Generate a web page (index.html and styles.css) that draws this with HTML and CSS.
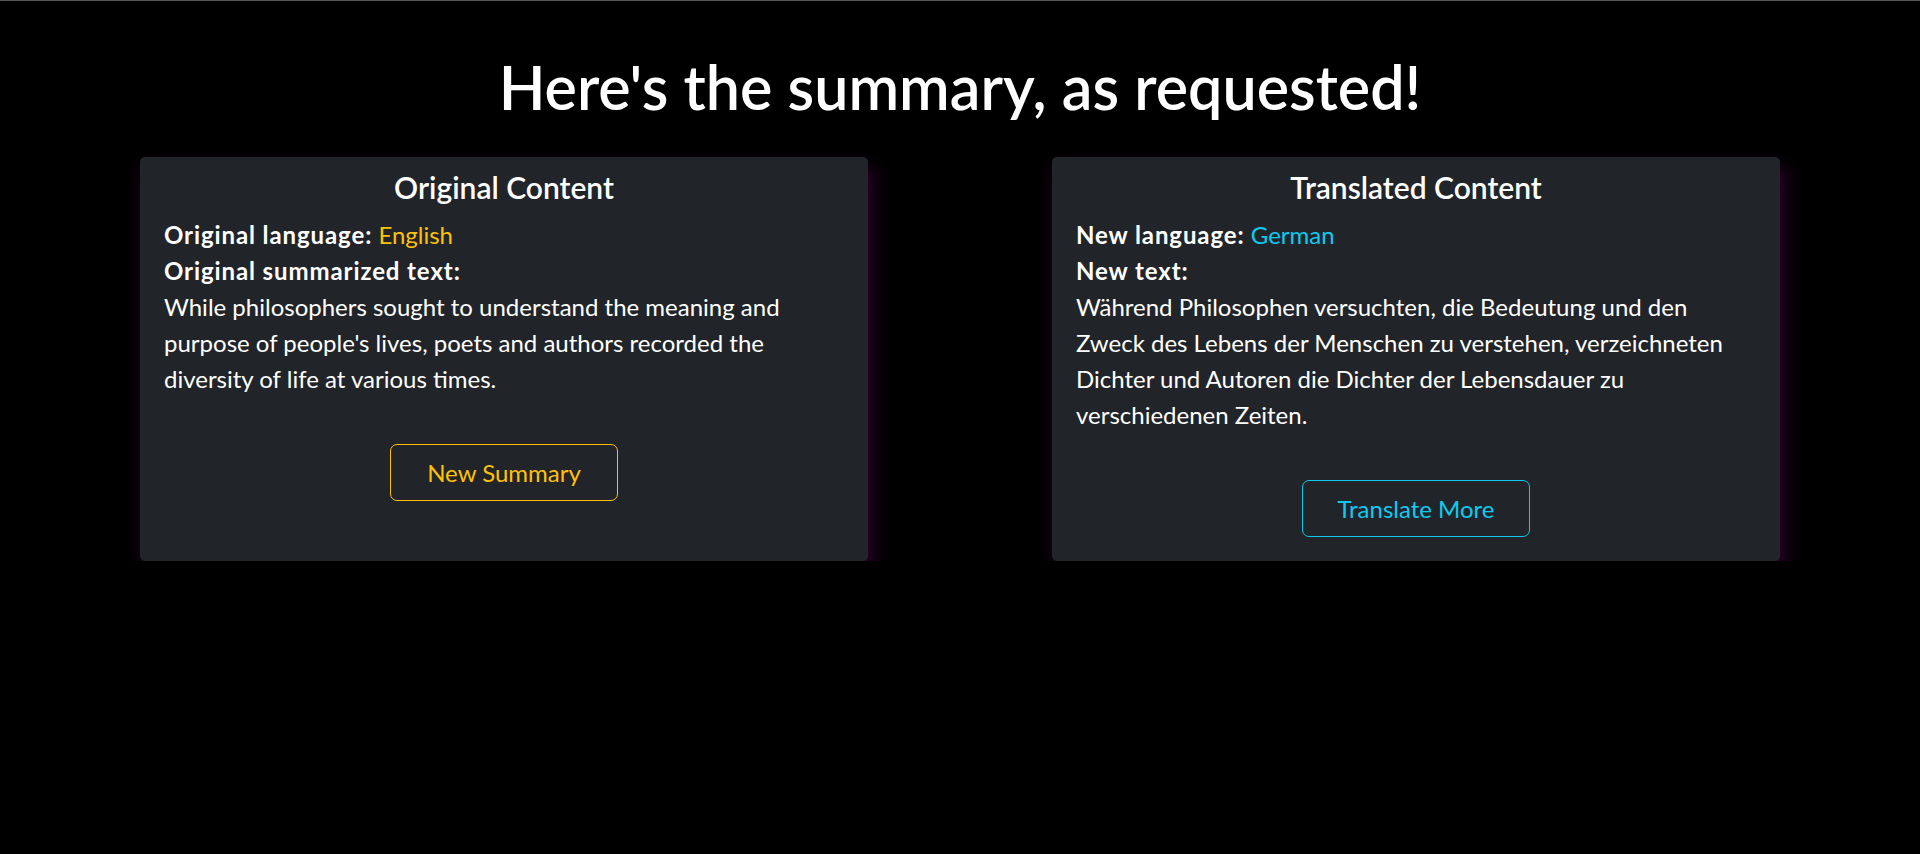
FILE: index.html
```html
<!DOCTYPE html>
<html lang="en">
<head>
<meta charset="utf-8">
<title>Summary</title>
<link rel="stylesheet" href="styles.css">
</head>
<body>
<main class="page">
  <h1 class="page-title">Here's the summary, as requested!</h1>
  <div class="cards">
    <section class="card">
      <h2 class="card-title">Original Content</h2>
      <div class="card-body">
        <p class="line"><strong>Original language:</strong> <span class="lang lang-original">English</span></p>
        <p class="line"><strong>Original summarized text:</strong></p>
        <p class="text">While philosophers sought to understand the meaning and purpose of people's lives, poets and authors recorded the diversity of life at various times.</p>
      </div>
      <div class="actions">
        <button class="btn btn-warning" type="button">New Summary</button>
      </div>
    </section>
    <section class="card">
      <h2 class="card-title">Translated Content</h2>
      <div class="card-body">
        <p class="line"><strong>New language:</strong> <span class="lang lang-new">German</span></p>
        <p class="line"><strong>New text:</strong></p>
        <p class="text">Während Philosophen versuchten, die Bedeutung und den Zweck des Lebens der Menschen zu verstehen, verzeichneten Dichter und Autoren die Dichter der Lebensdauer zu verschiedenen Zeiten.</p>
      </div>
      <div class="actions">
        <button class="btn btn-info" type="button">Translate More</button>
      </div>
    </section>
  </div>
</main>
</body>
</html>
```
FILE: styles.css
```css
html, body {
  background: #000;
}

body {
  margin: 0;
  border-top: 1px solid #555;
  color: #fff;
  font-family: Lato, "Open Sans", sans-serif;
  font-size: 24px;
  line-height: 36px;
}

.page {
  padding-top: 49px;
}

.page-title {
  margin: 0;
  text-align: center;
  font-size: 61px;
  font-weight: 600;
  line-height: 1.2;
}

.cards {
  display: flex;
  justify-content: center;
  gap: 184px;
  margin-top: 34px;
}

.card {
  width: 728px;
  box-sizing: border-box;
  padding: 12px 24px 24px;
  background: #212529;
  border-radius: 5px;
  box-shadow: 4px 10px 18px rgba(170, 0, 170, 0.3);
}

.card-title {
  margin: 0 0 12px;
  text-align: center;
  font-size: 30px;
  font-weight: 600;
  line-height: 36px;
}

.card-body p {
  margin: 0;
}

.card-body strong {
  font-weight: 700;
  letter-spacing: 0.9px;
}

.lang-original {
  color: #ffc107;
}

.lang-new {
  color: #0dcaf0;
}

.actions {
  margin-top: 47px;
  text-align: center;
}

.btn {
  width: 228px;
  box-sizing: border-box;
  padding: 9.5px 20px;
  background: transparent;
  border: 1px solid currentColor;
  border-radius: 7px;
  font-family: inherit;
  font-size: 24px;
  line-height: 36px;
  cursor: pointer;
}

.btn-warning {
  color: #ffc107;
  border-color: #ffc107;
}

.btn-info {
  color: #0dcaf0;
  border-color: #0dcaf0;
}
```
